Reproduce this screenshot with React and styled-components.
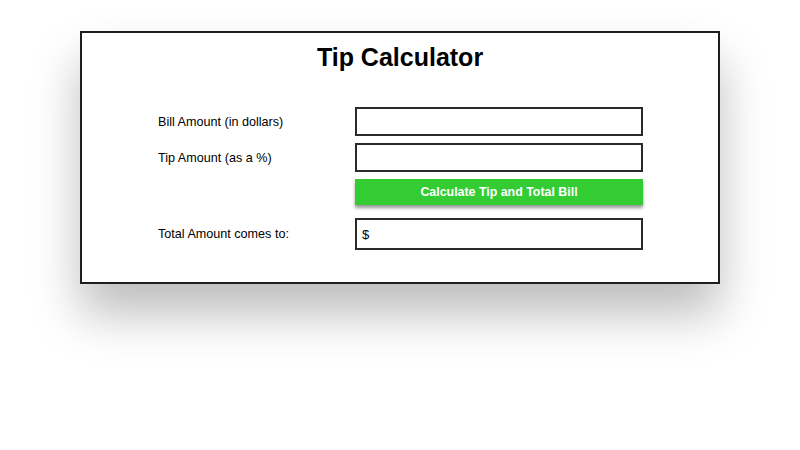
import React, { useState } from "react";
import styled, { createGlobalStyle } from "styled-components";

const Global = createGlobalStyle`
  html, body { margin: 0; padding: 0; background: #ffffff; }
  body { font-family: "Liberation Sans", Arial, sans-serif; color: #000; }
`;

const Page = styled.div`
  box-sizing: border-box;
  min-height: 100vh;
  display: flex;
  justify-content: center;
  align-items: flex-start;
  padding-top: 31px;
`;

const Card = styled.section`
  box-sizing: border-box;
  width: 640px;
  height: 253px;
  border: 2px solid #1e1e1e;
  background: #fff;
  box-shadow: 0 30px 45px rgba(0, 0, 0, 0.26);
  padding: 10px 0 0 76px;
`;

const Title = styled.h1`
  margin: 0 0 0 -76px;
  font-size: 25px;
  font-weight: bold;
  text-align: center;
  line-height: 28px;
`;

const Form = styled.div`
  display: grid;
  grid-template-columns: 197px 288px;
  margin-top: 36px;
  row-gap: 7px;
  align-items: center;
`;

const Label = styled.label`
  font-size: 12.6px;
  line-height: 15px;
  padding-top: 1px;
`;

const Field = styled.input`
  box-sizing: border-box;
  height: ${(p) => p.$h || 29}px;
  width: 288px;
  border: 2px solid #2a2a2a;
  background: #fff;
  font-family: inherit;
  font-size: 13px;
  padding: 0 5px;
  outline: none;
  margin: 0;
`;

const Button = styled.button`
  grid-column: 2;
  box-sizing: border-box;
  height: 26px;
  width: 288px;
  border: none;
  background: #33cc33;
  color: #fff;
  font-family: inherit;
  font-weight: bold;
  font-size: 12.4px;
  box-shadow: 0 3px 3px rgba(0, 0, 0, 0.4);
  cursor: pointer;
  margin-bottom: 6px;
`;

export default function App() {
  const [bill, setBill] = useState("");
  const [tip, setTip] = useState("");
  const [total, setTotal] = useState("$");

  const calc = () => {
    const b = parseFloat(bill);
    const t = parseFloat(tip);
    if (isNaN(b) || isNaN(t)) return;
    setTotal("$" + (b + (b * t) / 100).toFixed(2));
  };

  return (
    <>
      <Global />
      <Page>
        <Card>
          <Title>Tip Calculator</Title>
          <Form>
            <Label htmlFor="bill">Bill Amount (in dollars)</Label>
            <Field id="bill" value={bill} onChange={(e) => setBill(e.target.value)} />
            <Label htmlFor="tip">Tip Amount (as a %)</Label>
            <Field id="tip" value={tip} onChange={(e) => setTip(e.target.value)} />
            <Button onClick={calc}>Calculate Tip and Total Bill</Button>
            <Label htmlFor="total">Total Amount comes to:</Label>
            <Field id="total" $h={32} value={total} readOnly />
          </Form>
        </Card>
      </Page>
    </>
  );
}
